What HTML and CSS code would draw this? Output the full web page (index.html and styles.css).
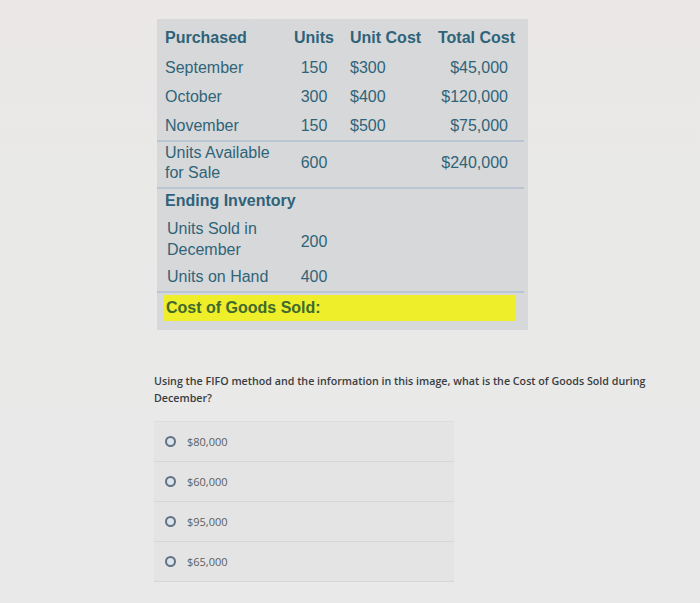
FILE: index.html
```html
<!DOCTYPE html>
<html>
<head>
<meta charset="utf-8">
<link rel="stylesheet" href="styles.css">
</head>
<body>
<div class="page">
  <div class="panel">
    <div class="grid">
      <div class="c1 hd row-h">Purchased</div>
      <div class="c2 hd row-h">Units</div>
      <div class="c3 hd row-h">Unit Cost</div>
      <div class="c4 hd hd4 row-h">Total Cost</div>

      <div class="c1 row">September</div>
      <div class="c2 row">150</div>
      <div class="c3 row">$300</div>
      <div class="c4 row">$45,000</div>

      <div class="c1 row">October</div>
      <div class="c2 row">300</div>
      <div class="c3 row">$400</div>
      <div class="c4 row">$120,000</div>

      <div class="c1 row">November</div>
      <div class="c2 row">150</div>
      <div class="c3 row">$500</div>
      <div class="c4 row">$75,000</div>

      <div class="sep"></div>

      <div class="c1 row2">Units Available<br>for Sale</div>
      <div class="c2 row2">600</div>
      <div class="c3 row2"></div>
      <div class="c4 row2">$240,000</div>

      <div class="sep"></div>

      <div class="full hd row-e">Ending Inventory</div>

      <div class="c1 row3 ind">Units Sold in<br>December</div>
      <div class="c2 row3 low">200</div>
      <div class="c3 row3"></div>
      <div class="c4 row3"></div>

      <div class="c1 row ind">Units on Hand</div>
      <div class="c2 row">400</div>
      <div class="c3 row"></div>
      <div class="c4 row"></div>

      <div class="sep"></div>

      <div class="full cogs">Cost of Goods Sold:</div>
    </div>
  </div>

  <p class="question">Using the FIFO method and the information in this image, what is the Cost of Goods Sold during December?</p>

  <div class="options">
    <label class="opt"><span class="radio"></span><span class="otext">$80,000</span></label>
    <label class="opt"><span class="radio"></span><span class="otext">$60,000</span></label>
    <label class="opt"><span class="radio"></span><span class="otext">$95,000</span></label>
    <label class="opt"><span class="radio"></span><span class="otext">$65,000</span></label>
  </div>
</div>
</body>
</html>
```
FILE: styles.css
```css
html, body {
  margin: 0;
  padding: 0;
}
body {
  width: 700px;
  height: 603px;
  overflow: hidden;
  background: linear-gradient(180deg, #ebe7e7 0%, #e9e9e8 30%, #e8e9e8 100%);
}
.page {
  padding: 19px 0 0 0;
}
.panel {
  margin-left: 157px;
  width: 371px;
  height: 311px;
  background: #d7d8da;
  box-sizing: border-box;
  padding: 0 8px 0 7px;
  font-family: "Liberation Sans", Arial, sans-serif;
  font-size: 16px;
  color: #2f6478;
}
.grid {
  display: grid;
  grid-template-columns: 126px 48px 94px 88px;
}
.grid > div {
  display: flex;
  align-items: center;
}
.hd {
  font-weight: bold;
  color: #2e6379;
}
.row-h { height: 34px; padding-top: 3px; box-sizing: border-box; }
.row { height: 29px; }
.row2 { height: 45px; line-height: 20px; padding-bottom: 3px; box-sizing: border-box; }
.row3 { height: 47px; line-height: 21px; }
.row-e { height: 26px; padding-bottom: 2px; box-sizing: border-box; }
.c1 { padding-left: 1px; }
.c2 { justify-content: center; }
.c3 { padding-left: 12px; }
.c4 { justify-content: flex-end; padding-right: 12px; }
.hd4 { justify-content: flex-start; padding-left: 6px; padding-right: 0; }
.ind { padding-left: 3px; }
.low { padding-top: 6px; box-sizing: border-box; }
.sep {
  grid-column: 1 / -1;
  height: 2px;
  background: #b9c6d2;
  margin-left: -7px;
  margin-right: -4px;
}
.full {
  grid-column: 1 / -1;
}
.full.hd { padding-left: 1px; }
.cogs {
  margin-top: 2px;
  margin-left: -1px;
  margin-right: 5px;
  height: 26px;
  padding-left: 3px;
  background: #eeee2a;
  color: #3f6a2c;
  font-weight: bold;
}
.question {
  margin: 43px 0 0 154px;
  width: 500px;
  font-family: "Open Sans", sans-serif;
  font-weight: 600;
  font-size: 10.7px;
  line-height: 17px;
  color: #3a3d3f;
}
.options {
  margin: 14px 0 0 154px;
  width: 300px;
  background: #e3e4e3;
  border-top: 1px solid #dcdddc;
}
.opt {
  display: flex;
  align-items: center;
  height: 40px;
  border-bottom: 1px solid #d6d7d6;
  box-sizing: border-box;
  padding-left: 11px;
}
.radio {
  width: 7px;
  height: 7px;
  border-radius: 50%;
  border: 2px solid #5f7384;
  background: #dde3ea;
}
.otext {
  margin-left: 11px;
  font-family: "Open Sans", sans-serif;
  font-size: 11px;
  color: #5b5e60;
}
```
